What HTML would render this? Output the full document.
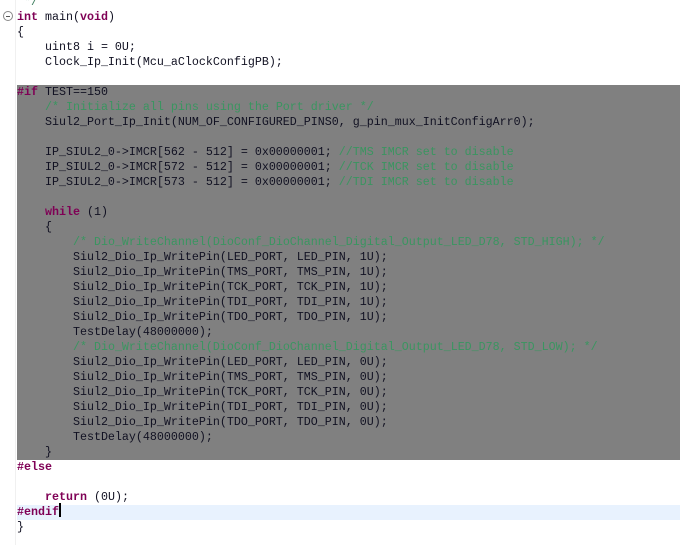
<!DOCTYPE html>
<html><head><meta charset="utf-8"><style>
html,body{margin:0;padding:0;background:#fff;width:680px;height:545px;overflow:hidden;position:relative}
.gut{position:absolute;left:15px;top:0;width:1px;height:545px;background:#f0f0f0}
.code{position:absolute;left:0;top:-5.5px;width:680px;font-family:"Liberation Mono",monospace;font-size:11.67px;color:#111122}
.l{height:15px;line-height:15px;white-space:pre;padding-left:17px;position:relative}
.g{background:#808080;margin-left:17px;padding-left:0}
.cur{background:#e8f2fe;margin-left:17px;padding-left:0}
.k{color:#7f0055;font-weight:bold}
.c{color:#3f7f5f}
.g .c{color:#3a9560}
.fold{position:absolute;left:3px;top:11px;width:8px;height:8px;border:1px solid #888;border-radius:50%;}
.fold:after{content:"";position:absolute;left:2px;top:3.5px;width:4px;height:1px;background:#555}
.caret{display:inline-block;width:2px;height:14px;background:#000;vertical-align:middle;margin-top:-2px}
</style></head><body>
<div class="gut"></div>
<div class="fold"></div>
<div class="code">
<div class="l"><span class="c"> */</span></div>
<div class="l"><span class="k">int</span> main(<span class="k">void</span>)</div>
<div class="l">{</div>
<div class="l">    uint8 i = 0U;</div>
<div class="l">    Clock_Ip_Init(Mcu_aClockConfigPB);</div>
<div class="l"> </div>
<div class="l g"><span class="k">#if</span> TEST==150</div>
<div class="l g">    <span class="c">/* Initialize all pins using the Port driver */</span></div>
<div class="l g">    Siul2_Port_Ip_Init(NUM_OF_CONFIGURED_PINS0, g_pin_mux_InitConfigArr0);</div>
<div class="l g"> </div>
<div class="l g">    IP_SIUL2_0-&gt;IMCR[562 - 512] = 0x00000001; <span class="c">//TMS IMCR set to disable</span></div>
<div class="l g">    IP_SIUL2_0-&gt;IMCR[572 - 512] = 0x00000001; <span class="c">//TCK IMCR set to disable</span></div>
<div class="l g">    IP_SIUL2_0-&gt;IMCR[573 - 512] = 0x00000001; <span class="c">//TDI IMCR set to disable</span></div>
<div class="l g"> </div>
<div class="l g">    <span class="k">while</span> (1)</div>
<div class="l g">    {</div>
<div class="l g">        <span class="c">/* Dio_WriteChannel(DioConf_DioChannel_Digital_Output_LED_D78, STD_HIGH); */</span></div>
<div class="l g">        Siul2_Dio_Ip_WritePin(LED_PORT, LED_PIN, 1U);</div>
<div class="l g">        Siul2_Dio_Ip_WritePin(TMS_PORT, TMS_PIN, 1U);</div>
<div class="l g">        Siul2_Dio_Ip_WritePin(TCK_PORT, TCK_PIN, 1U);</div>
<div class="l g">        Siul2_Dio_Ip_WritePin(TDI_PORT, TDI_PIN, 1U);</div>
<div class="l g">        Siul2_Dio_Ip_WritePin(TDO_PORT, TDO_PIN, 1U);</div>
<div class="l g">        TestDelay(48000000);</div>
<div class="l g">        <span class="c">/* Dio_WriteChannel(DioConf_DioChannel_Digital_Output_LED_D78, STD_LOW); */</span></div>
<div class="l g">        Siul2_Dio_Ip_WritePin(LED_PORT, LED_PIN, 0U);</div>
<div class="l g">        Siul2_Dio_Ip_WritePin(TMS_PORT, TMS_PIN, 0U);</div>
<div class="l g">        Siul2_Dio_Ip_WritePin(TCK_PORT, TCK_PIN, 0U);</div>
<div class="l g">        Siul2_Dio_Ip_WritePin(TDI_PORT, TDI_PIN, 0U);</div>
<div class="l g">        Siul2_Dio_Ip_WritePin(TDO_PORT, TDO_PIN, 0U);</div>
<div class="l g">        TestDelay(48000000);</div>
<div class="l g">    }</div>
<div class="l"><span class="k">#else</span></div>
<div class="l"> </div>
<div class="l">    <span class="k">return</span> (0U);</div>
<div class="l cur"><span class="k">#endif</span><span class="caret"></span></div>
<div class="l">}</div>
</div>
</body></html>
